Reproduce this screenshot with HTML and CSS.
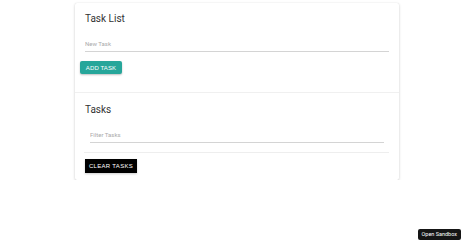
FILE: index.html
```html
<!DOCTYPE html>
<html lang="en">
<head>
    <meta charset="UTF-8">
    <meta name="viewport" content="width=device-width, initial-scale=1.0">
    <title>Task List</title>
    <link rel="stylesheet" href="styles.css">
</head>
<body>
    <div class="container">
        <div class="card">
            <div class="card-section">
                <h2 class="card-title">Task List</h2>
                <form id="taskForm">
                    <div class="field">
                        <input type="text" id="task" placeholder="New Task">
                    </div>
                    <button type="submit" class="btn btn-teal">ADD TASK</button>
                </form>
            </div>
            <div class="card-section card-section-tasks">
                <h2 class="card-title">Tasks</h2>
                <div class="field field-filter">
                    <input type="text" id="filter" placeholder="Filter Tasks">
                </div>
                <ul class="collection"></ul>
                <button class="btn btn-black">CLEAR TASKS</button>
            </div>
        </div>
    </div>

    <a class="sandbox" href="#">Open Sandbox</a>
</body>
</html>
```

FILE: styles.css
```css
body {
    font-family: Roboto, "Liberation Sans", sans-serif;
    margin: 0;
    padding: 0;
    background-color: #ffffff;
}

.container {
    width: 324px;
    margin: 3px 0 0 75px;
}

.card {
    background-color: #ffffff;
    border-radius: 2px;
    box-shadow: 0 1px 3px rgba(0, 0, 0, 0.18), 0 0 1px rgba(0, 0, 0, 0.12);
}

.card-section {
    padding: 10px 10px 18px 10px;
}

.card-section-tasks {
    border-top: 1px solid #f0f0f0;
    padding-top: 11px;
    padding-bottom: 7px;
}

.card-title {
    margin: 0 0 11px 0;
    font-size: 10px;
    line-height: 12px;
    font-weight: 400;
    color: #333333;
}

.field input {
    display: block;
    width: 100%;
    height: 16px;
    padding: 0;
    border: none;
    border-bottom: 1px solid #d4d4d4;
    box-sizing: border-box;
    font-family: inherit;
    font-size: 6px;
    color: #333333;
    outline: none;
}

.field input::placeholder {
    color: #aaaaaa;
}

.field-filter {
    margin: 0 5px;
}

.collection {
    list-style: none;
    margin: 9px 0 0 -1px;
    padding: 0;
    border-top: 1px solid #eeeeee;
}

.btn {
    display: block;
    padding: 0;
    border: none;
    border-radius: 2px;
    font-family: "Liberation Sans", Arial, sans-serif;
    font-size: 6px;
    font-weight: 400;
    letter-spacing: 0.1px;
    color: #ffffff;
    cursor: pointer;
}

.btn-teal {
    margin: 9px 0 0 -5px;
    width: 42px;
    height: 13px;
    background-color: #26a69a;
    box-shadow: 0 1px 2px rgba(0, 0, 0, 0.25);
}

.btn-black {
    margin-top: 6px;
    width: 52px;
    height: 14px;
    border-radius: 0;
    background-color: #000000;
    letter-spacing: 0.3px;
    box-shadow: 0 1px 2px rgba(0, 0, 0, 0.2);
}

.sandbox {
    position: fixed;
    right: 13px;
    bottom: 8px;
    height: 11px;
    padding: 0 4px;
    border-radius: 2px;
    background-color: #151515;
    color: #ffffff;
    font-size: 5.5px;
    line-height: 11px;
    text-decoration: none;
}
```
